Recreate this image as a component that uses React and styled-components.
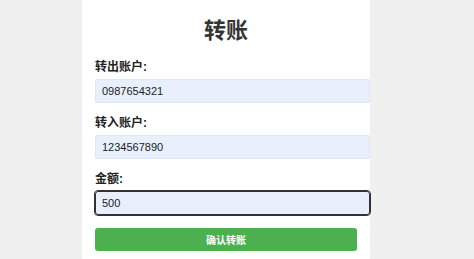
import React from 'react';
import styled, { createGlobalStyle } from 'styled-components';

const Global = createGlobalStyle`
    body {
        margin: 0;
        background-color: #f0f0f0;
        font-family: "Liberation Sans", "Noto Sans CJK SC", sans-serif;
        overflow: hidden;
    }
`
const Card = styled.div`
    box-sizing: border-box;
    width: 288px;
    height: 100vh;
    margin-left: 82px;
    padding: 18px 13px 0 13px;
    background-color: white;
`
const Title = styled.h2`
    margin: 0 0 16px 0;
    font-size: 22px;
    line-height: 26px;
    font-weight: bold;
    color: #333;
    text-align: center;
`
const Field = styled.div`
    display: flex;
    flex-direction: column;
    margin-bottom: 13px;
`
const Label = styled.label`
    font-size: 12px;
    line-height: 14px;
    font-weight: bold;
    color: #222;
    margin-bottom: 5px;
`
const Input = styled.input`
    box-sizing: border-box;
    width: calc(100% + 13px);
    height: 24px;
    padding: 0 6px;
    border: 1px solid ${p => (p.$focus ? '#333' : '#dfe6f2')};
    outline: ${p => (p.$focus ? '1px solid #333' : 'none')};
    border-radius: ${p => (p.$focus ? '3px' : '2px')};
    background-color: #e8f0fe;
    font-family: "Liberation Sans", sans-serif;
    font-size: 11px;
    color: #222;
`
const Submit = styled.button`
    width: 100%;
    height: 23px;
    border: none;
    border-radius: 3px;
    background-color: #4caf50;
    color: white;
    font-family: "Liberation Sans", "Noto Sans CJK SC", sans-serif;
    font-size: 10px;
    font-weight: bold;
`

const App = () => {
    return (
        <>
            <Global />
            <Card>
                <Title>转账</Title>
                <Field>
                    <Label>转出账户:</Label>
                    <Input defaultValue="0987654321" />
                </Field>
                <Field>
                    <Label>转入账户:</Label>
                    <Input defaultValue="1234567890" />
                </Field>
                <Field>
                    <Label>金额:</Label>
                    <Input $focus defaultValue="500" />
                </Field>
                <Submit>确认转账</Submit>
            </Card>
        </>
    )
}
export default App;
